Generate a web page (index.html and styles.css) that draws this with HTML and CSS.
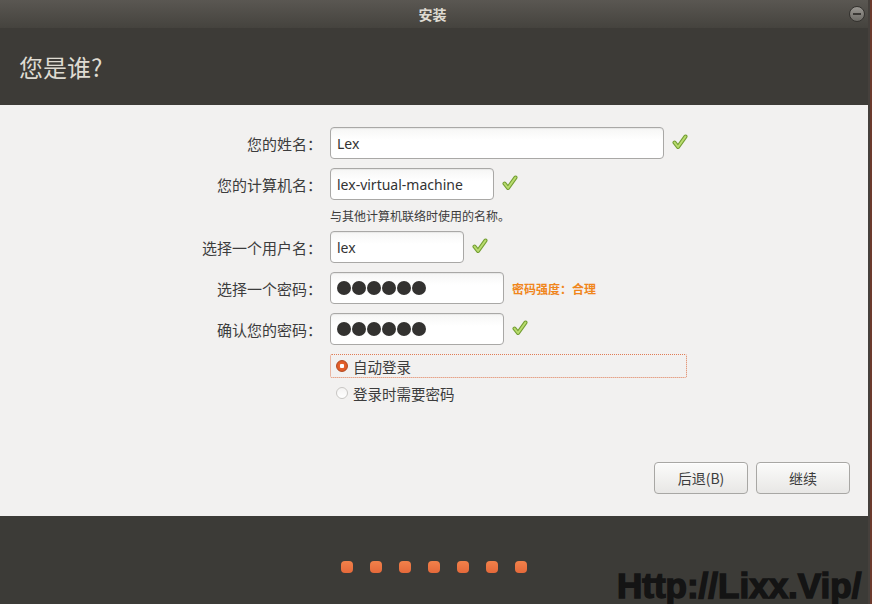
FILE: index.html
```html
<!DOCTYPE html>
<html lang="zh-CN">
<head>
  <meta charset="UTF-8">
  <title>安装</title>
  <link rel="stylesheet" href="styles.css">
</head>
<body>
<div class="screen">
  <div class="window">
    <div class="titlebar">
      <span></span>
      <span class="title">安装</span>
      <span class="close"><span class="close-bar"></span></span>
    </div>
    <div class="header">
      <h1>您是谁?</h1>
    </div>

    <div class="content">
      <div class="form">
        <label class="label">您的姓名：</label>
        <div class="field">
          <div class="entry w-name">Lex</div>
          <svg class="tick" viewBox="0 0 16 16" width="16" height="16"><path d="M2.5 8.5 L6 13 L13.5 2.5" fill="none" stroke="#739e33" stroke-width="4" stroke-linecap="round" stroke-linejoin="round"/><path d="M2.5 8.5 L6 13 L13.5 2.5" fill="none" stroke="#b9dc6e" stroke-width="2" stroke-linecap="round" stroke-linejoin="round"/></svg>
        </div>

        <label class="label">您的计算机名：</label>
        <div class="field">
          <div class="entry w-host">lex-virtual-machine</div>
          <svg class="tick" viewBox="0 0 16 16" width="16" height="16"><path d="M2.5 8.5 L6 13 L13.5 2.5" fill="none" stroke="#739e33" stroke-width="4" stroke-linecap="round" stroke-linejoin="round"/><path d="M2.5 8.5 L6 13 L13.5 2.5" fill="none" stroke="#b9dc6e" stroke-width="2" stroke-linecap="round" stroke-linejoin="round"/></svg>
        </div>

        <span></span>
        <div class="hint">与其他计算机联络时使用的名称。</div>

        <label class="label">选择一个用户名：</label>
        <div class="field">
          <div class="entry w-user">lex</div>
          <svg class="tick" viewBox="0 0 16 16" width="16" height="16"><path d="M2.5 8.5 L6 13 L13.5 2.5" fill="none" stroke="#739e33" stroke-width="4" stroke-linecap="round" stroke-linejoin="round"/><path d="M2.5 8.5 L6 13 L13.5 2.5" fill="none" stroke="#b9dc6e" stroke-width="2" stroke-linecap="round" stroke-linejoin="round"/></svg>
        </div>

        <label class="label">选择一个密码：</label>
        <div class="field">
          <div class="entry w-pass"><span class="dots"><i></i><i></i><i></i><i></i><i></i><i></i></span></div>
          <span class="strength">密码强度：合理</span>
        </div>

        <label class="label">确认您的密码：</label>
        <div class="field">
          <div class="entry w-pass"><span class="dots"><i></i><i></i><i></i><i></i><i></i><i></i></span></div>
          <svg class="tick" viewBox="0 0 16 16" width="16" height="16"><path d="M2.5 8.5 L6 13 L13.5 2.5" fill="none" stroke="#739e33" stroke-width="4" stroke-linecap="round" stroke-linejoin="round"/><path d="M2.5 8.5 L6 13 L13.5 2.5" fill="none" stroke="#b9dc6e" stroke-width="2" stroke-linecap="round" stroke-linejoin="round"/></svg>
        </div>

        <span></span>
        <div class="radios">
          <div class="radio focused"><span class="knob on"></span>自动登录</div>
          <div class="radio"><span class="knob"></span>登录时需要密码</div>
        </div>
      </div>

      <div class="buttons">
        <button class="btn">后退(B)</button>
        <button class="btn">继续</button>
      </div>
    </div>

    <div class="footer">
      <div class="steps">
        <span class="step"></span><span class="step"></span><span class="step"></span><span class="step"></span><span class="step"></span><span class="step"></span><span class="step"></span>
      </div>
      <div class="watermark">Http://Lixx.Vip/</div>
    </div>
  </div>
  <div class="edge"></div>
</div>
</body>
</html>
```

FILE: styles.css
```css
* { box-sizing: border-box; }
body {
  margin: 0;
  background: #3c3b37;
  font-family: "Noto Sans", "Noto Sans CJK SC", sans-serif;
  color: #3c3c3c;
}

.screen {
  display: flex;
  width: 872px;
  height: 604px;
  overflow: hidden;
}

.window {
  width: 868px;
  display: flex;
  flex-direction: column;
}

.edge {
  width: 4px;
  background: linear-gradient(to right, #45403c 0 50%, #6c3a2d 50%);
}

/* title bar */
.titlebar {
  height: 28px;
  display: grid;
  grid-template-columns: 1fr auto 1fr;
  align-items: center;
  padding-right: 3px;
  background: linear-gradient(#5a5752, #45433e);
}

.title {
  font-family: "Noto Sans CJK SC", sans-serif;
  font-size: 14px;
  font-weight: bold;
  color: #dfdbd2;
}

.close {
  justify-self: end;
  width: 16px;
  height: 16px;
  border-radius: 50%;
  background: linear-gradient(#9a9792, #6d6b66);
  border: 1px solid #34322f;
  display: flex;
  align-items: center;
  justify-content: center;
}

.close-bar {
  width: 8px;
  height: 2px;
  background: #3a3835;
}

.header {
  height: 77px;
  background: #3d3b37;
  display: flex;
  align-items: center;
  padding: 0 19px 0;
}

h1 {
  margin: 0;
  font-family: "Noto Sans CJK SC", sans-serif;
  font-size: 24px;
  font-weight: normal;
  color: #dfdbd2;
}

/* main form area */
.content {
  height: 411px;
  background: #f2f1f0;
  display: flex;
  flex-direction: column;
  padding: 22px 18px 22px 0;
}

.form {
  display: grid;
  grid-template-columns: 322px 1fr;
  column-gap: 8px;
  row-gap: 9px;
  align-items: center;
}

.label {
  text-align: right;
  font-family: "Noto Sans CJK SC", sans-serif;
  font-size: 15px;
  color: #3c3c3c;
}

.field {
  display: flex;
  align-items: center;
  gap: 8px;
}

.entry {
  height: 32px;
  padding: 0 6px;
  display: flex;
  align-items: center;
  border: 1px solid #a9a8a6;
  border-radius: 4px;
  background: linear-gradient(#f6f6f5, #ffffff 40%);
  box-shadow: inset 0 1px 1px rgba(0, 0, 0, 0.06);
  font-family: "Noto Sans", sans-serif;
  font-size: 14px;
  color: #333;
}

.w-name { width: 334px; }
.w-host { width: 164px; }
.w-user { width: 134px; }
.w-pass { width: 174px; }

.tick { margin-top: -2px; }

.dots {
  display: flex;
  gap: 1px;
}

.dots i {
  width: 14px;
  height: 14px;
  border-radius: 50%;
  background: #333230;
}

.strength {
  font-family: "Noto Sans CJK SC", sans-serif;
  font-size: 12px;
  font-weight: bold;
  color: #f0861c;
}

.hint {
  height: 13px;
  line-height: 13px;
  font-family: "Noto Sans CJK SC", sans-serif;
  font-size: 12px;
  color: #3c3c3c;
}

.radios {
  display: flex;
  flex-direction: column;
  gap: 3px;
}

.radio {
  width: 357px;
  height: 24px;
  display: flex;
  align-items: center;
  gap: 5px;
  padding-left: 5px;
  border: 1px solid transparent;
  font-family: "Noto Sans CJK SC", sans-serif;
  font-size: 14.5px;
  color: #3c3c3c;
}

.radio.focused {
  border: 1px dotted #e07c55;
  border-radius: 2px;
}

.knob {
  width: 12px;
  height: 12px;
  border-radius: 50%;
  border: 1px solid #c8c6c3;
  background: linear-gradient(#f4f3f2, #ffffff);
}

.knob.on {
  border: 1px solid #b2491f;
  background: radial-gradient(circle, #ffffff 0 2px, #e6612c 2.5px, #d45322);
}

.buttons {
  margin-top: auto;
  display: flex;
  justify-content: flex-end;
  gap: 8px;
}

.btn {
  width: 94px;
  height: 32px;
  border: 1px solid #a8a7a4;
  border-radius: 4px;
  background: linear-gradient(#fbfbfa, #e8e7e5);
  box-shadow: 0 1px 0 rgba(255, 255, 255, 0.8) inset;
  font-family: "Noto Sans CJK SC", sans-serif;
  font-size: 14px;
  color: #3c3c3c;
  padding: 0;
}

/* footer with progress */
.footer {
  flex: 1;
  position: relative;
  background: #3c3b37;
  padding-top: 45px;
}

.steps {
  display: flex;
  justify-content: center;
  gap: 17px;
}

.step {
  width: 12px;
  height: 12px;
  border-radius: 4px;
  background: linear-gradient(#f2814a, #e5693a);
}

.watermark {
  position: absolute;
  left: 617px;
  top: 52px;
  font-family: "Liberation Sans", Arial, sans-serif;
  font-size: 35px;
  line-height: 35px;
  font-weight: bold;
  color: #141414;
  -webkit-text-stroke: 1.5px #141414;
  white-space: nowrap;
}
```
